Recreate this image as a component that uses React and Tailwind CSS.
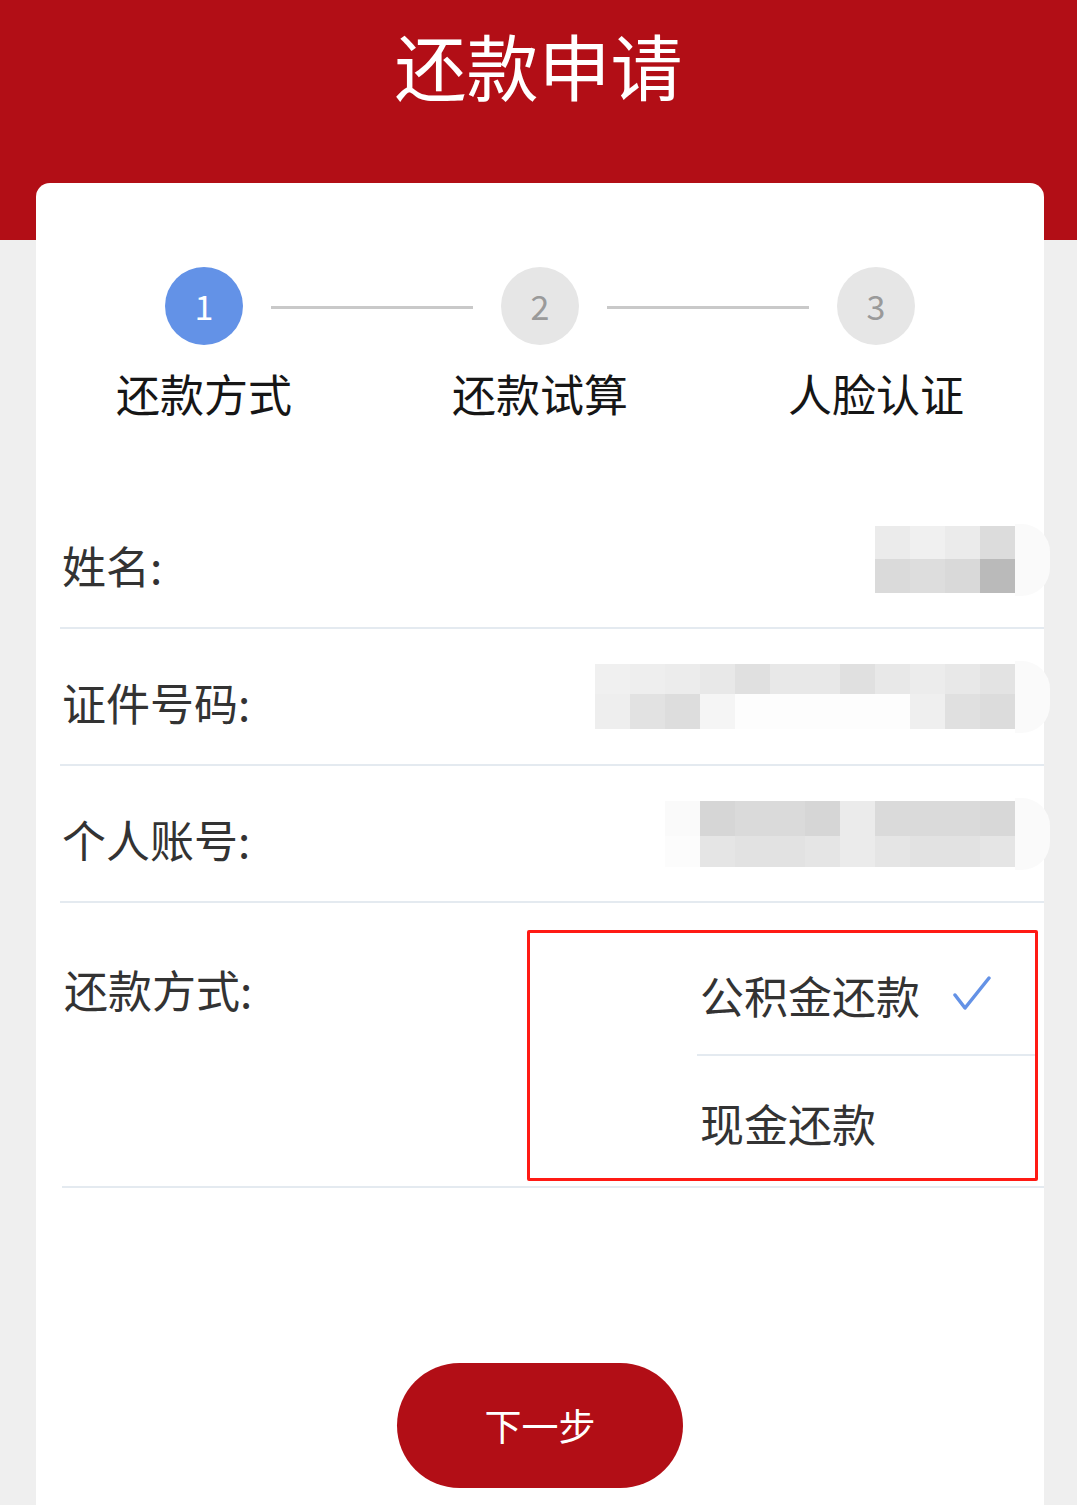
import React from 'react'

const RED = 'bg-[#b20e16]'

// pixel blocks that mask the personal data in each row
const masks = {
  name: {
    rows: [
      ['#ebebeb', '#f0f0f0', '#ebebeb', '#dcdcdc'],
      ['#dadada', '#dddddd', '#d9d9d9', '#bababa'],
    ],
    heights: ['h-[33px]', 'h-[34px]'],
  },
  idno: {
    rows: [
      ['#f0f0f0', '#eeeeee', '#ececec', '#e8e8e8', '#e0e0e0', '#e8e8e8', '#e8e8e8', '#e0e0e0', '#e8e8e8', '#ececec', '#e8e8e8', '#e3e3e3'],
      ['#eeeeee', '#e2e2e2', '#dddddd', '#f5f5f5', '#fdfdfd', '#fdfdfd', '#fdfdfd', '#fdfdfd', '#fdfdfd', '#efefef', '#e0e0e0', '#dcdcdc'],
    ],
    heights: ['h-[30px]', 'h-[35px]'],
  },
  account: {
    rows: [
      ['#fafafa', '#d6d6d6', '#dadada', '#dadada', '#d6d6d6', '#ebebeb', '#dadada', '#dadada', '#dadada', '#d8d8d8'],
      ['#fcfcfc', '#e5e5e5', '#e2e2e2', '#e2e2e2', '#e5e5e5', '#ebebeb', '#e5e5e5', '#e2e2e2', '#e2e2e2', '#e5e5e5'],
    ],
    heights: ['h-[35px]', 'h-[31px]'],
  },
}

const Mask = ({ data }) => (
  <div className="flex items-center mr-[-6px]">
    <div className="flex flex-col">
      {data.rows.map((row, i) => (
        <div key={i} className={`flex ${data.heights[i]}`}>
          {row.map((c, j) => (
            <div key={j} className="w-[35px] h-full" style={{ background: c }} />
          ))}
        </div>
      ))}
    </div>
    <div className="w-[35px] h-[72px] bg-[#fafafa] rounded-r-[28px]" />
  </div>
)

const steps = [
  { n: 1, label: '还款方式', active: true },
  { n: 2, label: '还款试算' },
  { n: 3, label: '人脸认证' },
]

const Stepper = () => (
  <div className="relative grid grid-cols-3 pt-[84px]">
    {/* connectors between the circles */}
    <div className="absolute top-[123px] left-[235px] w-[202px] h-[3px] bg-[#c9c9c9]" />
    <div className="absolute top-[123px] left-[571px] w-[202px] h-[3px] bg-[#c9c9c9]" />
    {steps.map((s) => (
      <div key={s.n} className="flex flex-col items-center">
        <div
          className={`w-[78px] h-[78px] rounded-full flex items-center justify-center text-[34px] leading-none ${
            s.active ? 'bg-[#6392e7] text-white' : 'bg-[#e6e6e6] text-[#9a9a9a]'
          }`}
        >
          {s.n}
        </div>
        <div className="mt-[26px] text-[44px] leading-[44px] text-[#161616]">{s.label}</div>
      </div>
    ))}
  </div>
)

const Row = ({ label, mask }) => (
  <div className="h-[137px] border-b-2 border-[#e4eaf0] flex items-center justify-between">
    <span className="text-[44px] leading-none text-[#333] pl-[2px] pt-[10px]">{label}</span>
    <Mask data={mask} />
  </div>
)

const Check = () => (
  <svg width="38" height="36" viewBox="0 0 38 36" fill="none">
    <polyline points="2,19 12,32 36,2" stroke="#6492e6" strokeWidth="3.5" strokeLinecap="round" strokeLinejoin="round" />
  </svg>
)

export default function App() {
  return (
    <div
      className="min-h-screen bg-[#efefef]"
      style={{ fontFamily: '"Noto Sans CJK SC", "Noto Sans", sans-serif' }}
    >
      <div className={`${RED} h-[240px] flex justify-center`}>
        <h1 className="mt-[22px] text-[72px] leading-[84px] text-white font-normal">还款申请</h1>
      </div>

      <div className="mt-[-57px] ml-[36px] mr-[33px] bg-white rounded-t-[14px] pb-[60px]">
        <Stepper />

        <div className="mt-[77px] pl-[24px]">
          <Row label="姓名:" mask={masks.name} />
          <Row label="证件号码:" mask={masks.idno} />
          <Row label="个人账号:" mask={masks.account} />

          <div className="h-[285px] border-b-2 border-[#e4eaf0] flex items-start justify-between ml-[2px]">
            <span className="mt-[64px] text-[44px] leading-none text-[#333] pl-[2px]">还款方式:</span>
            <div className="mt-[27px] mr-[6px] w-[511px] h-[251px] border-[3px] border-[#ff1a14] rounded-[2px] pl-[167px] flex flex-col">
              <div className="h-[123px] border-b-2 border-[#e4eaf0] flex items-center justify-between pr-[44px]">
                <span className="text-[44px] leading-none text-[#333] pl-[3px] pt-[2px]">公积金还款</span>
                <Check />
              </div>
              <div className="flex-1 flex items-center">
                <span className="text-[44px] leading-none text-[#333] pl-[3px] pt-[12px]">现金还款</span>
              </div>
            </div>
          </div>
        </div>

        <div className="flex justify-center mt-[175px]">
          <button className={`${RED} w-[286px] h-[125px] rounded-full text-white text-[37px] leading-none`}>
            下一步
          </button>
        </div>
      </div>
    </div>
  )
}
